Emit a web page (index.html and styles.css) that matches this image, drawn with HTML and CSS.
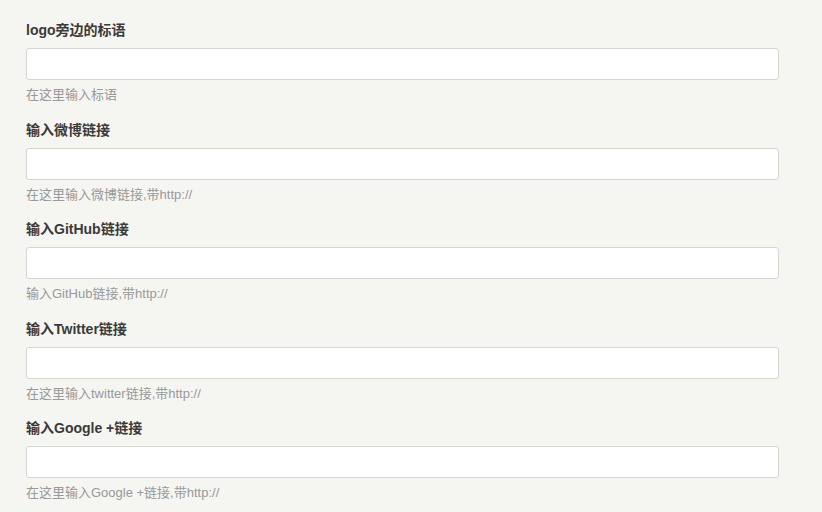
FILE: index.html
```html
<!DOCTYPE html>
<html lang="zh-CN">
<head>
<meta charset="utf-8">
<link rel="stylesheet" href="styles.css">
</head>
<body>
<div class="form">
  <div class="group">
    <label class="label">logo旁边的标语</label>
    <input class="field" type="text">
    <p class="help">在这里输入标语</p>
  </div>
  <div class="group">
    <label class="label">输入微博链接</label>
    <input class="field" type="text">
    <p class="help">在这里输入微博链接,带http://</p>
  </div>
  <div class="group">
    <label class="label">输入GitHub链接</label>
    <input class="field" type="text">
    <p class="help">输入GitHub链接,带http://</p>
  </div>
  <div class="group">
    <label class="label">输入Twitter链接</label>
    <input class="field" type="text">
    <p class="help">在这里输入twitter链接,带http://</p>
  </div>
  <div class="group">
    <label class="label">输入Google +链接</label>
    <input class="field" type="text">
    <p class="help">在这里输入Google +链接,带http://</p>
  </div>
</div>
</body>
</html>
```
FILE: styles.css
```css
html, body {
  margin: 0;
  padding: 0;
  background: #f5f5f1;
}
body {
  font-family: "Liberation Sans", Arial, "Noto Sans CJK SC", sans-serif;
}
.form {
  display: flex;
  flex-direction: column;
  padding: 20px 43px 0 26px;
  gap: 15px;
}
.group {
  display: flex;
  flex-direction: column;
}
.label {
  font-size: 14px;
  font-weight: bold;
  line-height: 20px;
  color: #3a3a3a;
  margin-bottom: 8px;
}
.field {
  box-sizing: border-box;
  width: 753px;
  height: 32px;
  margin: 0;
  border: 1px solid #d6d6d2;
  border-radius: 3px;
  background: #fff;
  padding: 4px 8px;
  font-size: 13px;
}
.help {
  margin: 6px 0 0;
  font-size: 13px;
  line-height: 18.5px;
  color: #999;
}
```
